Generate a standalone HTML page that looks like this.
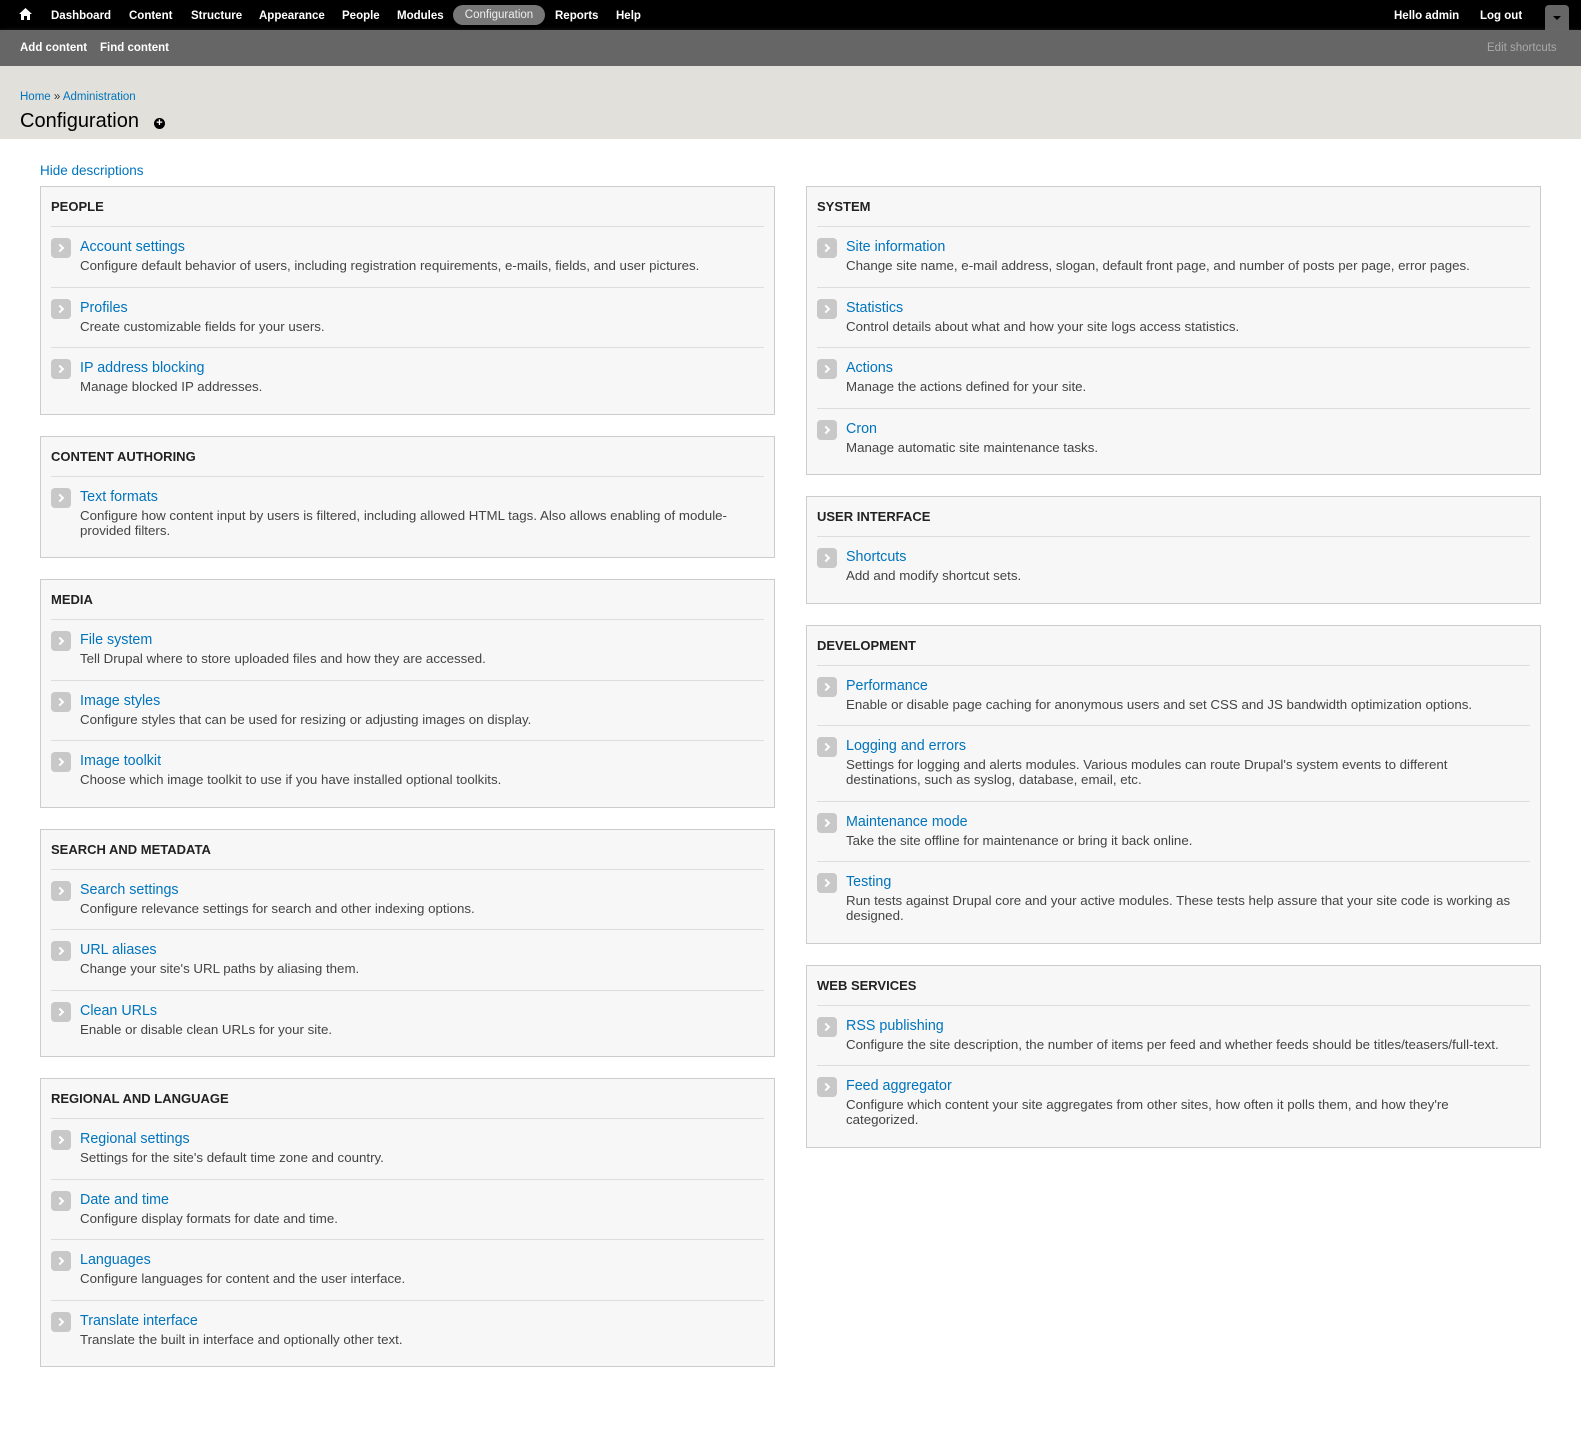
<!DOCTYPE html>
<html><head><meta charset="utf-8"><style>
*{box-sizing:border-box;margin:0;padding:0}
body{width:1581px;height:1429px;background:#fff;font-family:"Liberation Sans","DejaVu Sans",sans-serif;color:#333;position:relative;overflow:hidden}
#tb{position:absolute;left:0;top:0;width:1581px;height:30px;background:#000;color:#fff;font-size:11.5px;font-weight:bold}
#tb span{position:absolute;top:10px}
#pill{position:absolute;left:453px;top:5px;width:92px;height:20px;border-radius:10px;background:#777;color:#eee;font-weight:normal;text-align:center;line-height:21px;font-size:11.5px}
#sb{position:absolute;left:0;top:30px;width:1581px;height:36px;background:#666;color:#fff;font-size:11.5px;font-weight:bold;box-shadow:0 3px 5px #888}
#sb span{position:absolute;top:12px}
#hd{position:absolute;left:0;top:66px;width:1581px;height:73px;background:#e1e0da}
a,.l{color:#0074bd;text-decoration:none}
.col{position:absolute;top:186px;width:735px}
.p{border:1px solid #ccc;background:#f7f7f7;padding:0 10px 6px;margin-bottom:21px}
.p h3{font-size:13px;font-weight:bold;color:#222;line-height:18px;padding:11px 0 10px;border-bottom:1px solid #ddd}
.i{position:relative;padding:9px 0 13.5px 29px;border-bottom:1px solid #ddd}
.i:last-child{border-bottom:none}
.i .t{font-size:14.3px;line-height:22px;color:#0074bd}
.i .d{font-size:13.3px;line-height:15px;color:#444;padding-right:12px}
.i:before{content:"";position:absolute;left:0;top:11px;width:20px;height:20px;border-radius:4px;background:#c8c8c8}
.i:after{content:"";position:absolute;left:6px;top:18px;width:4px;height:4px;border-top:2px solid #fff;border-right:2px solid #fff;transform:rotate(45deg)}
</style></head><body>
<div id="tb">
<svg style="position:absolute;left:19px;top:8px" width="13" height="13" viewBox="0 0 13 13"><path d="M6.5 0 L13 6 L11 6 L11 12 L8 12 L8 8 L5 8 L5 12 L2 12 L2 6 L0 6Z" fill="#fff"/></svg>
<span style="left:51px">Dashboard</span><span style="left:129px">Content</span><span style="left:191px">Structure</span><span style="left:259px">Appearance</span><span style="left:342px">People</span><span style="left:397px">Modules</span>
<div id="pill">Configuration</div>
<span style="left:555px">Reports</span><span style="left:616px">Help</span>
<span style="left:1394px">Hello admin</span><span style="left:1480px">Log out</span>
<div style="position:absolute;left:1545px;top:5px;width:24px;height:27px;background:#666;border-radius:4px 4px 0 0"><div style="position:absolute;left:8px;top:11px;border:4px solid transparent;border-top:4px solid #000"></div></div>
</div>
<div id="sb"><span style="left:20px">Add content</span><span style="left:100px">Find content</span><span style="left:1487px;color:#aaa;font-weight:normal;font-size:11.5px">Edit shortcuts</span></div>
<div id="hd">
<div style="position:absolute;left:20px;top:25px;font-size:11.5px"><span class="l">Home</span> » <span class="l">Administration</span></div>
<div style="position:absolute;left:20px;top:44px;font-size:20px;color:#000">Configuration</div>
<div style="position:absolute;left:154px;top:52px;width:11px;height:11px;border-radius:50%;background:#000;color:#fff;font-size:11px;line-height:10px;text-align:center;font-weight:bold">+</div>
</div>
<div style="position:absolute;left:40px;top:163px;font-size:13.5px" class="l">Hide descriptions</div>
<div class="col" style="left:40px">
<div class="p"><h3>PEOPLE</h3>
<div class="i"><div class="t">Account settings</div><div class="d">Configure default behavior of users, including registration requirements, e-mails, fields, and user pictures.</div></div>
<div class="i"><div class="t">Profiles</div><div class="d">Create customizable fields for your users.</div></div>
<div class="i"><div class="t">IP address blocking</div><div class="d">Manage blocked IP addresses.</div></div></div>
<div class="p"><h3>CONTENT AUTHORING</h3>
<div class="i"><div class="t">Text formats</div><div class="d">Configure how content input by users is filtered, including allowed HTML tags. Also allows enabling of module-provided filters.</div></div></div>
<div class="p"><h3>MEDIA</h3>
<div class="i"><div class="t">File system</div><div class="d">Tell Drupal where to store uploaded files and how they are accessed.</div></div>
<div class="i"><div class="t">Image styles</div><div class="d">Configure styles that can be used for resizing or adjusting images on display.</div></div>
<div class="i"><div class="t">Image toolkit</div><div class="d">Choose which image toolkit to use if you have installed optional toolkits.</div></div></div>
<div class="p"><h3>SEARCH AND METADATA</h3>
<div class="i"><div class="t">Search settings</div><div class="d">Configure relevance settings for search and other indexing options.</div></div>
<div class="i"><div class="t">URL aliases</div><div class="d">Change your site's URL paths by aliasing them.</div></div>
<div class="i"><div class="t">Clean URLs</div><div class="d">Enable or disable clean URLs for your site.</div></div></div>
<div class="p"><h3>REGIONAL AND LANGUAGE</h3>
<div class="i"><div class="t">Regional settings</div><div class="d">Settings for the site's default time zone and country.</div></div>
<div class="i"><div class="t">Date and time</div><div class="d">Configure display formats for date and time.</div></div>
<div class="i"><div class="t">Languages</div><div class="d">Configure languages for content and the user interface.</div></div>
<div class="i"><div class="t">Translate interface</div><div class="d">Translate the built in interface and optionally other text.</div></div></div>
</div>
<div class="col" style="left:806px">
<div class="p"><h3>SYSTEM</h3>
<div class="i"><div class="t">Site information</div><div class="d">Change site name, e-mail address, slogan, default front page, and number of posts per page, error pages.</div></div>
<div class="i"><div class="t">Statistics</div><div class="d">Control details about what and how your site logs access statistics.</div></div>
<div class="i"><div class="t">Actions</div><div class="d">Manage the actions defined for your site.</div></div>
<div class="i"><div class="t">Cron</div><div class="d">Manage automatic site maintenance tasks.</div></div></div>
<div class="p"><h3>USER INTERFACE</h3>
<div class="i"><div class="t">Shortcuts</div><div class="d">Add and modify shortcut sets.</div></div></div>
<div class="p"><h3>DEVELOPMENT</h3>
<div class="i"><div class="t">Performance</div><div class="d">Enable or disable page caching for anonymous users and set CSS and JS bandwidth optimization options.</div></div>
<div class="i"><div class="t">Logging and errors</div><div class="d">Settings for logging and alerts modules. Various modules can route Drupal's system events to different destinations, such as syslog, database, email, etc.</div></div>
<div class="i"><div class="t">Maintenance mode</div><div class="d">Take the site offline for maintenance or bring it back online.</div></div>
<div class="i"><div class="t">Testing</div><div class="d">Run tests against Drupal core and your active modules. These tests help assure that your site code is working as designed.</div></div></div>
<div class="p"><h3>WEB SERVICES</h3>
<div class="i"><div class="t">RSS publishing</div><div class="d">Configure the site description, the number of items per feed and whether feeds should be titles/teasers/full-text.</div></div>
<div class="i"><div class="t">Feed aggregator</div><div class="d">Configure which content your site aggregates from other sites, how often it polls them, and how they're categorized.</div></div></div>
</div>
</body></html>
